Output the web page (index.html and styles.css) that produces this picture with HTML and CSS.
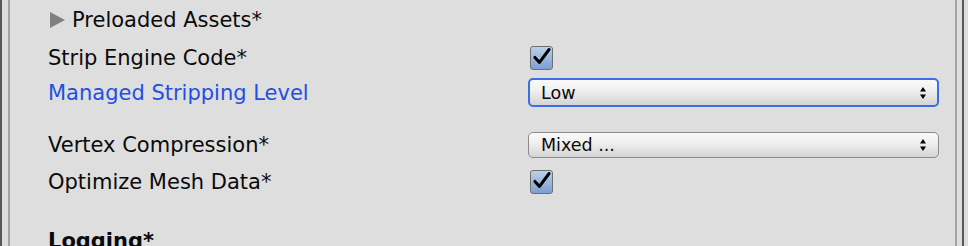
FILE: index.html
```html
<!DOCTYPE html>
<html>
<head>
<meta charset="utf-8">
<link rel="stylesheet" href="styles.css">
</head>
<body>
<div class="frame">
  <div class="edge-left"><span class="e-dark"></span><span class="e-light"></span><span class="e-gray"></span></div>
  <div class="panel">
    <div class="row r1">
      <div class="label fold"><span class="tri"></span>Preloaded Assets*</div>
    </div>
    <div class="row r2">
      <div class="label">Strip Engine Code*</div>
      <div class="ctrl"><span class="check"><svg viewBox="0 0 24 24" width="20" height="20"><path d="M3.5 12.5 L9 18.5 L20.5 3" fill="none" stroke="#000" stroke-width="3.6" stroke-linecap="round" stroke-linejoin="round"/></svg></span></div>
    </div>
    <div class="row r3">
      <div class="label blue">Managed Stripping Level</div>
      <div class="ctrl"><div class="select focus"><span class="val">Low</span><span class="arrows"><svg viewBox="0 0 6 12" width="6" height="12"><path d="M3 0 L6 4.5 L0 4.5 Z M3 12 L6 7.5 L0 7.5 Z" fill="#000"/></svg></span></div></div>
    </div>
    <div class="row r4">
      <div class="label">Vertex Compression*</div>
      <div class="ctrl"><div class="select"><span class="val">Mixed ...</span><span class="arrows"><svg viewBox="0 0 6 12" width="6" height="12"><path d="M3 0 L6 4.5 L0 4.5 Z M3 12 L6 7.5 L0 7.5 Z" fill="#000"/></svg></span></div></div>
    </div>
    <div class="row r5">
      <div class="label">Optimize Mesh Data*</div>
      <div class="ctrl"><span class="check"><svg viewBox="0 0 24 24" width="20" height="20"><path d="M3.5 12.5 L9 18.5 L20.5 3" fill="none" stroke="#000" stroke-width="3.6" stroke-linecap="round" stroke-linejoin="round"/></svg></span></div>
    </div>
    <div class="row r6">
      <div class="label bold">Logging*</div>
    </div>
  </div>
  <div class="edge-right"><span class="e-gray"></span><span class="e-light w5"></span><span class="e-dark"></span><span class="e-light w4"></span></div>
</div>
</body>
</html>
```
FILE: styles.css
```css
html, body {
  margin: 0;
  padding: 0;
  background: #dedede;
  overflow: hidden;
}
.frame {
  display: flex;
  width: 968px;
  height: 246px;
  overflow: hidden;
  font-family: "DejaVu Sans", sans-serif;
  font-size: 21px;
  color: #0a0a0a;
}
.edge-left, .edge-right {
  display: flex;
  height: 100%;
}
.e-dark { width: 2px; background: #595959; }
.e-light { width: 6px; background: #dedede; }
.e-light.w5 { width: 5px; }
.e-light.w4 { width: 4px; }
.e-gray { width: 2px; background: #a3a3a3; }
.panel {
  flex: 1;
  display: flex;
  flex-direction: column;
  padding-left: 38px;
  padding-top: 2px;
}
.row {
  display: flex;
  align-items: center;
  flex-shrink: 0;
}
.r1 { height: 36px; }
.r2 { height: 40px; }
.r3 { height: 29px; }
.r4 { height: 28px; margin-top: 24px; }
.r5 { height: 23px; margin-top: 11px; }
.r6 { height: 30px; margin-top: 36px; align-items: flex-start; }
.label {
  width: 480px;
  white-space: nowrap;
}
.fold {
  display: flex;
  align-items: center;
  padding-left: 2px;
}
.tri {
  width: 0;
  height: 0;
  border-top: 8px solid transparent;
  border-bottom: 8px solid transparent;
  border-left: 15px solid #808080;
  margin-right: 7px;
}
.blue { color: #1f50e0; }
.bold { font-weight: bold; }
.ctrl {
  display: flex;
  align-items: center;
}
.check {
  width: 21px;
  height: 22px;
  margin-left: 2px;
  border: 1px solid #6f6f6f;
  border-radius: 3px;
  background: linear-gradient(#bcd0ea, #7d9fd0);
  display: flex;
  align-items: center;
  justify-content: center;
  box-sizing: content-box;
}
.check svg { margin-top: -2px; }
.select {
  width: 411px;
  height: 26px;
  border: 1px solid #8b8b8b;
  border-radius: 5px;
  background: linear-gradient(#fafafa, #f0f0f0 40%, #d4d4d4);
  display: flex;
  align-items: center;
  justify-content: space-between;
  padding: 0 12px 0 12px;
  box-sizing: border-box;
  font-size: 17.5px;
  color: #0a0a0a;
}
.select.focus {
  height: 29px;
  border: 2px solid #3b6ee6;
  padding-left: 11px;
  padding-right: 11px;
}
.arrows { display: flex; }
```
